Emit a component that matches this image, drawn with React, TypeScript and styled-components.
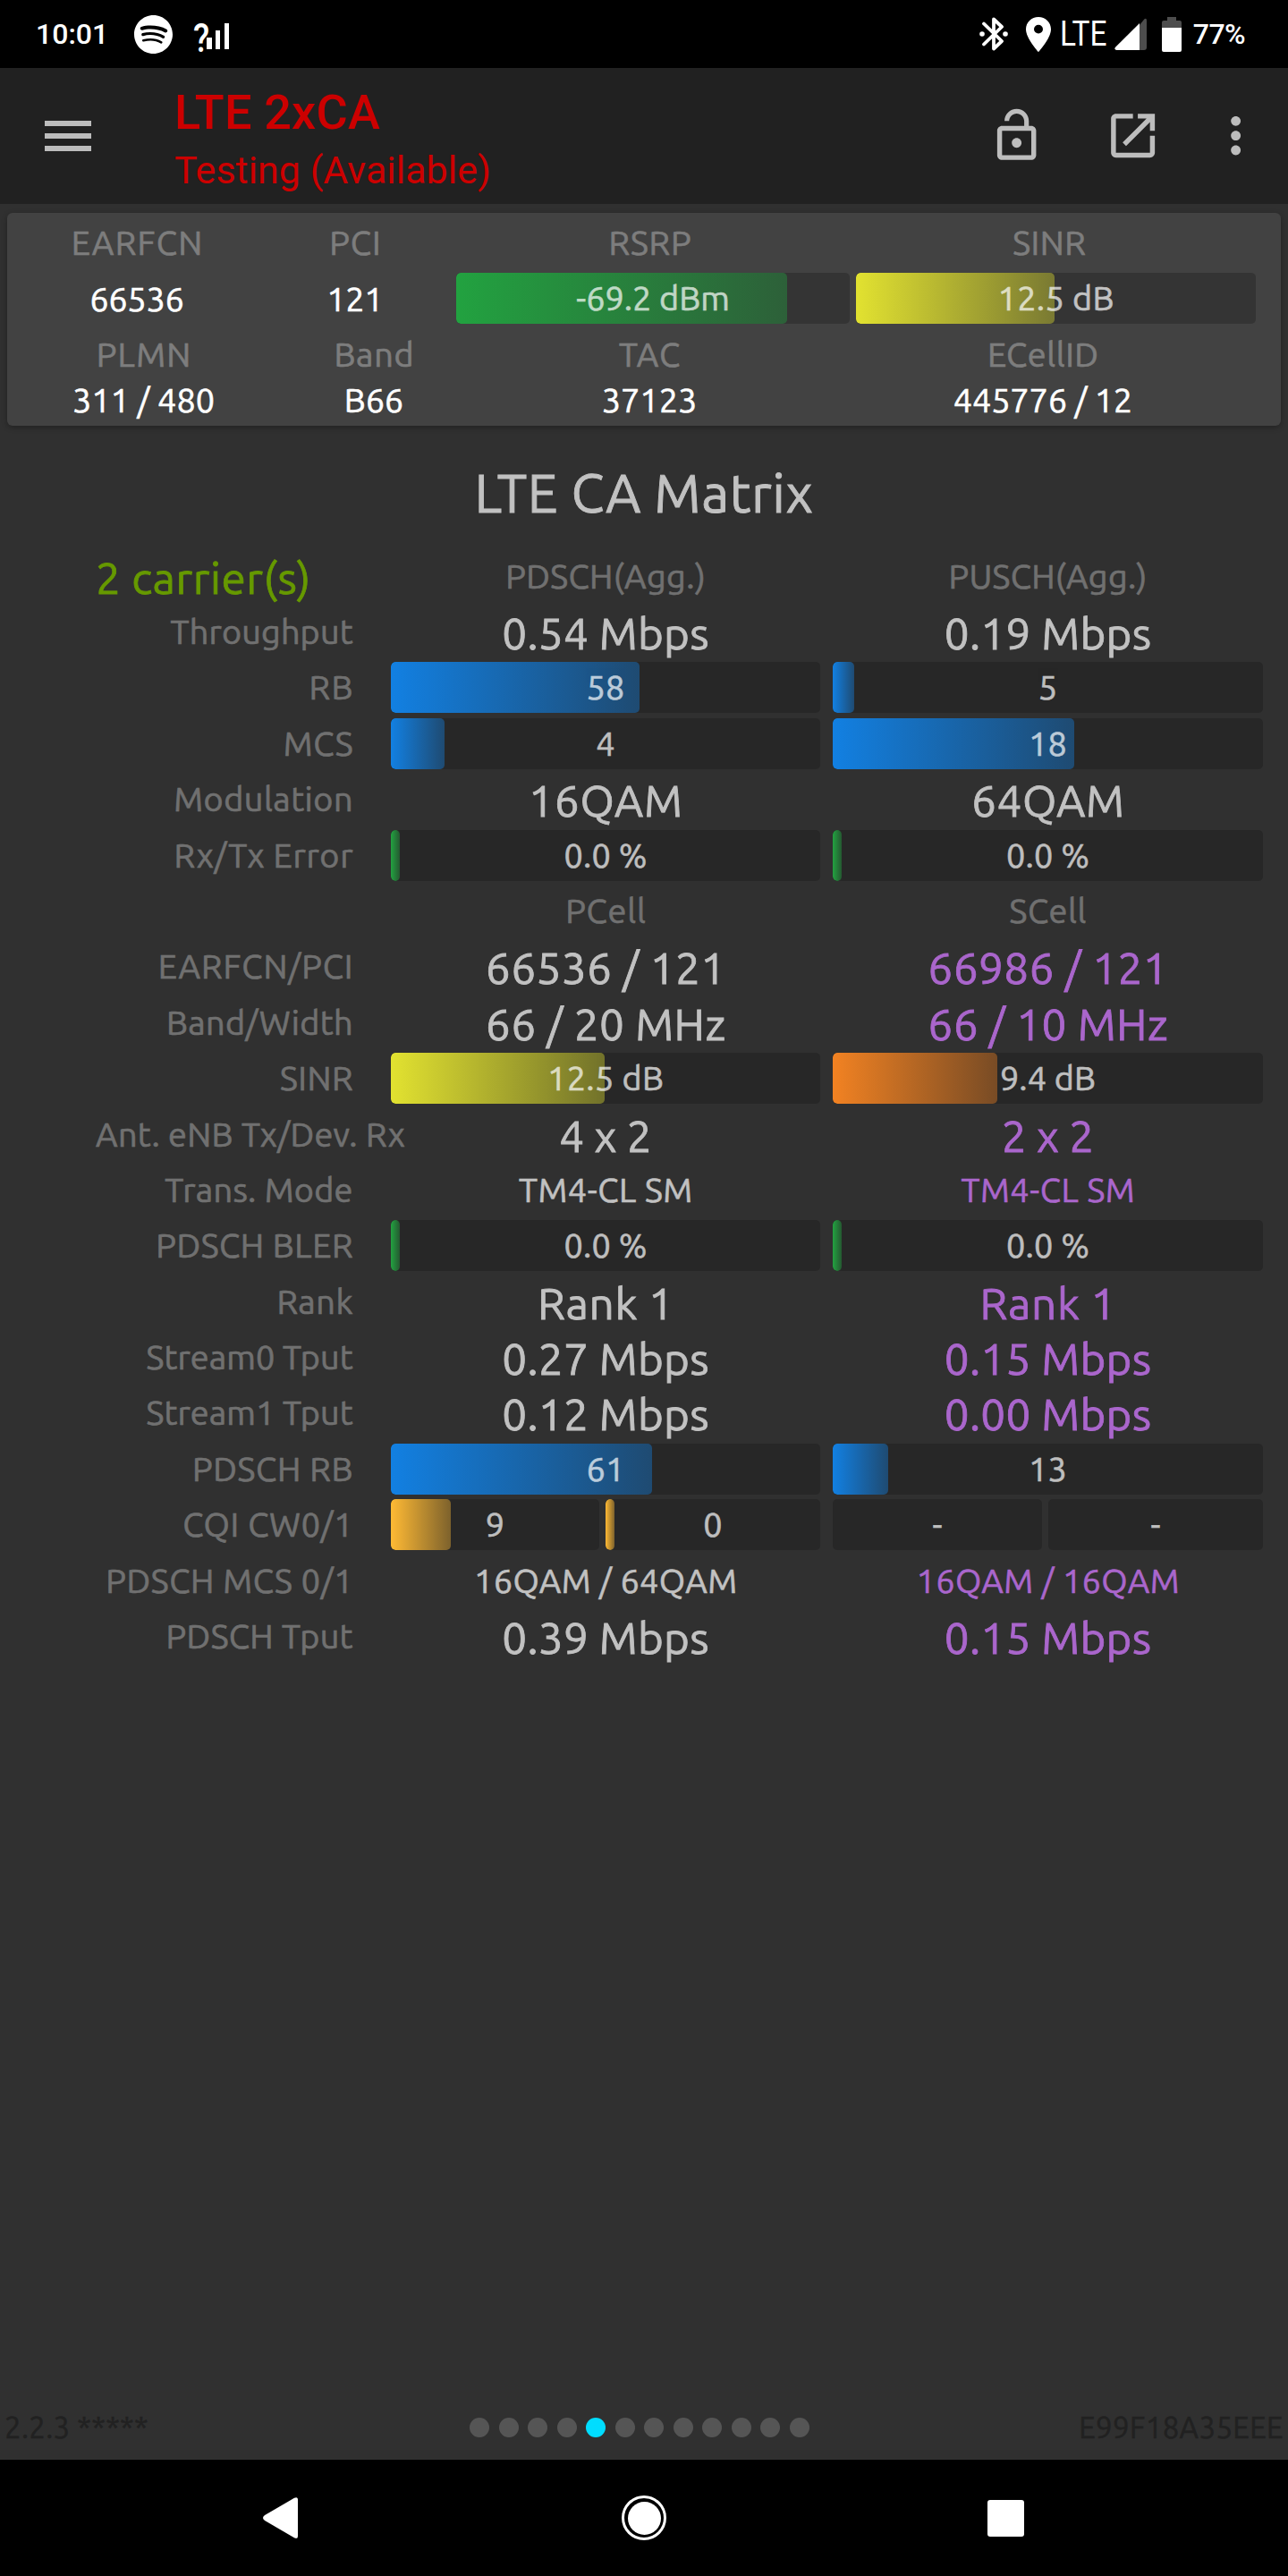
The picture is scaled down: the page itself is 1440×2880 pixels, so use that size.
import React from 'react';
import styled, { createGlobalStyle } from 'styled-components';
import { SiSpotify } from 'react-icons/si';

const GlobalStyle = createGlobalStyle`
  * { box-sizing: border-box; }
  body { margin: 0; background: #303030; }
`;

const Screen = styled.div`
  display: flex;
  flex-direction: column;
  width: 1440px;
  height: 2880px;
  overflow: hidden;
  background: #303030;
  font-family: 'Ubuntu', 'Noto Sans', 'Open Sans', sans-serif;
  color: #c1c1c1;
`;

/* ---------- status bar ---------- */

const StatusBar = styled.header`
  display: flex;
  align-items: center;
  flex: none;
  height: 76px;
  padding: 0 48px 0 40px;
  background: #000;
  color: #fff;
  font-family: Roboto, sans-serif;
`;

const StatusText = styled.span<{ $track?: number; $gap?: number }>`
  margin-left: ${(p) => p.$gap ?? 0}px;
  font-size: 32px;
  font-weight: 500;
  line-height: 38px;
  letter-spacing: ${(p) => p.$track ?? 0}px;
`;

const SpotifyIcon = styled(SiSpotify)`
  width: 43px;
  height: 43px;
  margin-left: 29px;
`;

const UnknownSignal = styled.div`
  display: flex;
  align-items: flex-end;
  height: 33px;
  margin-left: 23px;
`;

const QuestionMark = styled.span`
  width: 15px;
  font-size: 44px;
  font-weight: 500;
  line-height: 23px;
  transform: scaleX(0.85);
  transform-origin: left center;
`;

const SignalBar = styled.i<{ $h: number }>`
  width: 5.5px;
  height: ${(p) => p.$h}px;
  margin-right: 4.3px;
  background: #fff;
`;

const StatusRight = styled.div`
  display: flex;
  align-items: center;
  margin-left: auto;
`;

const NetworkType = styled.span`
  width: 58px;
  margin-left: 10px;
  font-size: 38px;
  line-height: 46px;
  transform: scaleX(0.88);
  transform-origin: left center;
`;

const Glyph = styled.svg<{ $gap?: number }>`
  display: block;
  flex: none;
  margin-left: ${(p) => p.$gap ?? 0}px;
`;

/* ---------- app bar ---------- */

const AppBar = styled.nav`
  display: flex;
  align-items: center;
  flex: none;
  height: 152px;
  padding: 0 26px 0 50px;
  background: #212121;
`;

const MenuLines = styled.div`
  display: flex;
  flex-direction: column;
  gap: 8.6px;
  width: 52px;
`;

const MenuLine = styled.i`
  height: 5.8px;
  background: #bdbdbd;
`;

const Heading = styled.div`
  flex: 1;
  margin-left: 93px;
  padding-top: 9px;
  color: #cc0000;
  font-family: Roboto, sans-serif;
  white-space: nowrap;
`;

const Title = styled.h1`
  margin: 0;
  font-size: 54px;
  font-weight: 500;
  line-height: 66px;
  letter-spacing: 0.2px;
`;

const Subtitle = styled.p`
  margin: 0;
  font-size: 43px;
  line-height: 62px;
`;

const ActionIcon = styled.svg<{ $gap?: number }>`
  flex: none;
  width: 65.3px;
  height: 65.3px;
  margin-left: ${(p) => p.$gap ?? 0}px;
  fill: #bdbdbd;
`;

/* ---------- text and meters ---------- */

type Tone = 'label' | 'value' | 'bright' | 'second' | 'carriers';

const tones: Record<Tone, { color: string; opacity: number }> = {
  label: { color: '#ffffff', opacity: 0.31 },
  value: { color: '#ffffff', opacity: 0.7 },
  bright: { color: '#ffffff', opacity: 1 },
  second: { color: '#aa66cc', opacity: 1 },
  carriers: { color: '#669900', opacity: 1 },
};

const Text = styled.span<{ $tone?: Tone; $large?: boolean; $track?: number }>`
  color: ${(p) => tones[p.$tone ?? 'value'].color};
  opacity: ${(p) => tones[p.$tone ?? 'value'].opacity};
  font-size: ${(p) => (p.$large ? 49.4 : 37.8)}px;
  line-height: ${(p) => (p.$large ? 59 : 56)}px;
  letter-spacing: ${(p) => p.$track ?? 0}px;
  margin-right: ${(p) => -(p.$track ?? 0)}px;
  -webkit-text-stroke: ${(p) => (p.$large ? 0.8 : 0.6)}px currentColor;
  white-space: nowrap;
`;

const fills = {
  blue: '18, 128, 226',
  green: '34, 162, 64',
  yellow: '226, 226, 48',
  orange: '242, 130, 34',
  amber: '255, 186, 52',
};

type Fill = keyof typeof fills;

const Track = styled.div<{ $width?: number }>`
  display: flex;
  position: relative;
  justify-content: center;
  width: ${(p) => (p.$width ? `${p.$width}px` : '100%')};
  height: 57px;
  border-radius: 5px;
  overflow: hidden;
  background: rgba(16, 16, 16, 0.26);
`;

const TrackFill = styled.div<{ $fill: Fill; $width: number }>`
  position: absolute;
  inset: 0 auto 0 0;
  width: ${(p) => p.$width}px;
  border-radius: 5px;
  background: linear-gradient(
    to right,
    rgb(${(p) => fills[p.$fill]}),
    rgba(${(p) => fills[p.$fill]}, 0.4)
  );
`;

const TrackText = styled(Text)`
  position: relative;
`;

interface MeterProps {
  text: string;
  track?: number;
  fill?: Fill;
  filled?: number;
  width?: number;
}

const Meter = ({ text, track, fill, filled, width }: MeterProps) => (
  <Track $width={width}>
    {fill && filled ? <TrackFill $fill={fill} $width={filled} /> : null}
    <TrackText $track={track}>{text}</TrackText>
  </Track>
);

/* ---------- serving cell card ---------- */

const Card = styled.section`
  display: flex;
  flex-direction: column;
  flex: none;
  height: 238px;
  margin: 10px 8px 0;
  padding-top: 5px;
  border-radius: 6px;
  background: #424242;
  box-shadow: 0 2px 6px rgba(0, 0, 0, 0.3);
`;

const SignalGrid = styled.div`
  display: grid;
  grid-template-columns: 290px 198px 454px 454px;
  grid-template-rows: 56px 57px;
  row-gap: 6px;
`;

const IdentityGrid = styled.div`
  display: grid;
  grid-template-columns: 305px 210px 406px 474px;
  grid-auto-rows: 50.7px;
  margin-top: 8.5px;
`;

const Cell = styled.div<{ $left?: number; $right?: number }>`
  display: flex;
  align-items: center;
  justify-content: center;
  padding: 0 ${(p) => p.$right ?? 0}px 0 ${(p) => p.$left ?? 0}px;
`;

/* ---------- carrier matrix ---------- */

const MatrixTitle = styled.h2`
  flex: none;
  margin: 40px 0 29.6px;
  font-size: 60.2px;
  font-weight: 400;
  line-height: 70px;
  letter-spacing: 0.57px;
  text-align: center;
  -webkit-text-stroke: 0.9px currentColor;
`;

const Matrix = styled.section`
  display: grid;
  grid-template-columns: 423px 480px 481px;
  grid-auto-rows: 62.4px;
  column-gap: 14px;
`;

const RowLabel = styled.div<{ $start?: boolean }>`
  display: flex;
  align-items: flex-start;
  justify-content: ${(p) => (p.$start ? 'flex-start' : 'flex-end')};
  padding: 0 28.5px 0 ${(p) => (p.$start ? 107 : 0)}px;
`;

const RowValue = styled.div`
  display: flex;
  align-items: flex-start;
  justify-content: center;
  gap: 7px;
`;

type Entry =
  | { kind: 'text'; text: string; large?: boolean; tone?: Tone; track?: number }
  | { kind: 'meters'; meters: MeterProps[] };

interface Row {
  label: string;
  track?: number;
  start?: boolean;
  headline?: boolean;
  cells: [Entry, Entry];
}

const head = (text: string, track: number): Entry => ({ kind: 'text', text, tone: 'label', track });
const big = (text: string, track = 0.28): Entry => ({ kind: 'text', text, large: true, track });
const big2 = (text: string, track = 0.28): Entry => ({ kind: 'text', text, large: true, tone: 'second', track });
const small = (text: string, track: number, tone: Tone = 'value'): Entry => ({ kind: 'text', text, tone, track });
const meter = (text: string, fill: Fill, filled: number, track = 0.2): Entry => ({
  kind: 'meters',
  meters: [{ text, fill, filled, track }],
});

const rows: Row[] = [
  { label: '2 carrier(s)', track: 0.53, start: true, headline: true, cells: [head('PDSCH(Agg.)', 0.39), head('PUSCH(Agg.)', 0.31)] },
  { label: 'Throughput', track: 0.16, cells: [big('0.54 Mbps'), big('0.19 Mbps')] },
  { label: 'RB', track: 1.3, cells: [meter('58', 'blue', 278), meter('5', 'blue', 24)] },
  { label: 'MCS', track: 0.78, cells: [meter('4', 'blue', 60), meter('18', 'blue', 270)] },
  { label: 'Modulation', track: 0.49, cells: [big('16QAM', 0.84), big('64QAM', 0.6)] },
  { label: 'Rx/Tx Error', track: 0.68, cells: [meter('0.0 %', 'green', 10), meter('0.0 %', 'green', 10)] },
  { label: '', cells: [head('PCell', 0.8), head('SCell', 0.57)] },
  { label: 'EARFCN/PCI', track: 0.93, cells: [big('66536 / 121', 0.47), big2('66986 / 121', 0.47)] },
  { label: 'Band/Width', track: 0.35, cells: [big('66 / 20 MHz', 0.47), big2('66 / 10 MHz', 0.47)] },
  { label: 'SINR', track: 0.51, cells: [meter('12.5 dB', 'yellow', 239, 0.33), meter('9.4 dB', 'orange', 184, 0.06)] },
  { label: 'Ant. eNB Tx/Dev. Rx', track: 0.33, start: true, cells: [big('4 x 2', 0), big2('2 x 2', 0)] },
  { label: 'Trans. Mode', track: 0.3, cells: [small('TM4-CL SM', 0.54), small('TM4-CL SM', 0.54, 'second')] },
  { label: 'PDSCH BLER', track: 0.55, cells: [meter('0.0 %', 'green', 10), meter('0.0 %', 'green', 10)] },
  { label: 'Rank', track: 0.51, cells: [big('Rank 1', 0.7), big2('Rank 1', 0.7)] },
  { label: 'Stream0 Tput', track: 0.07, cells: [big('0.27 Mbps'), big2('0.15 Mbps')] },
  { label: 'Stream1 Tput', track: 0.07, cells: [big('0.12 Mbps'), big2('0.00 Mbps')] },
  { label: 'PDSCH RB', track: 0.66, cells: [meter('61', 'blue', 292), meter('13', 'blue', 62)] },
  {
    label: 'CQI CW0/1',
    track: 0.65,
    cells: [
      {
        kind: 'meters',
        meters: [
          { text: '9', fill: 'amber', filled: 67, width: 233 },
          { text: '0', fill: 'amber', filled: 10, width: 240 },
        ],
      },
      { kind: 'meters', meters: [{ text: '-', width: 234 }, { text: '-', width: 240 }] },
    ],
  },
  { label: 'PDSCH MCS 0/1', track: 0.63, cells: [small('16QAM / 64QAM', 0.4), small('16QAM / 16QAM', 0.4, 'second')] },
  { label: 'PDSCH Tput', track: 0.37, cells: [big('0.39 Mbps'), big2('0.15 Mbps')] },
];

const EntryView = ({ entry }: { entry: Entry }) => (
  <RowValue>
    {entry.kind === 'text' ? (
      <Text $tone={entry.tone} $large={entry.large} $track={entry.track}>
        {entry.text}
      </Text>
    ) : (
      entry.meters.map((m, i) => <Meter key={i} {...m} />)
    )}
  </RowValue>
);

/* ---------- footer and navigation ---------- */

const Footer = styled.footer`
  display: grid;
  grid-template-columns: 1fr auto 1fr;
  align-items: center;
  flex: none;
  height: 72px;
  margin-top: auto;
  padding: 0 5px;
  color: #212121;
  font-size: 33px;
  line-height: 44px;
  -webkit-text-stroke: 0.5px currentColor;
`;

const Version = styled.span`
  letter-spacing: 0.27px;
`;

const DeviceId = styled.span`
  justify-self: end;
  letter-spacing: 0.36px;
`;

const Dots = styled.div`
  display: flex;
  gap: 10.56px;
  padding-right: 10px;
`;

const Dot = styled.i<{ $active: boolean }>`
  width: 22px;
  height: 22px;
  border-radius: 50%;
  background: ${(p) => (p.$active ? '#00ddff' : '#555555')};
`;

const NavBar = styled.nav`
  display: flex;
  align-items: center;
  flex: none;
  height: 130px;
  padding-left: 294px;
  background: #000;
`;

const HomeRing = styled.div`
  display: flex;
  align-items: center;
  justify-content: center;
  width: 50px;
  height: 50px;
  margin-left: 362px;
  border: 3px solid #fff;
  border-radius: 50%;
`;

const HomeDisc = styled.i`
  width: 37px;
  height: 37px;
  border-radius: 50%;
  background: #fff;
`;

const RecentsSquare = styled.i`
  width: 41px;
  height: 41px;
  margin-left: 359px;
  border-radius: 3px;
  background: #fff;
`;

export default function App() {
  return (
    <Screen>
      <GlobalStyle />
      <StatusBar>
        <StatusText>10:01</StatusText>
        <SpotifyIcon />
        <UnknownSignal>
          <QuestionMark>?</QuestionMark>
          <SignalBar $h={13} />
          <SignalBar $h={21} />
          <SignalBar $h={29} />
        </UnknownSignal>
        <StatusRight>
          <Glyph width="32" height="38" viewBox="0 0 32 38">
            <path d="M5 7.5 25 27 16 35.5V2.5L25 11 5 30.5" fill="none" stroke="#fff" strokeWidth="3.8" strokeLinecap="round" strokeLinejoin="round" />
            <circle cx="3" cy="19" r="2.8" fill="#fff" />
            <circle cx="29" cy="19" r="2.8" fill="#fff" />
          </Glyph>
          <Glyph $gap={20} width="28" height="39" viewBox="5 2 14 20" preserveAspectRatio="none">
            <path fill="#fff" d="M12 2C8.13 2 5 5.13 5 9c0 5.25 7 13 7 13s7-7.75 7-13c0-3.87-3.13-7-7-7zm0 9.5a2.5 2.5 0 0 1 0-5 2.5 2.5 0 0 1 0 5z" />
          </Glyph>
          <NetworkType>LTE</NetworkType>
          <Glyph $gap={3} width="36" height="36" viewBox="0 0 36 36">
            <path fill="#4d4d4d" d="M28 8 33.5 1.2Q36 0 36 3V33Q36 36 33 36H28Z" />
            <path fill="#fff" d="M28 6V36H2.500Q-.5 36 .8 33Z" />
          </Glyph>
          <Glyph $gap={17} width="22" height="39" viewBox="0 0 22 39">
            <path fill="#4d4d4d" d="M6 0H16V4H20Q22 4 22 6V13H0V6Q0 4 2 4H6Z" />
            <path fill="#fff" d="M0 12H22V37Q22 39 20 39H2Q0 39 0 37Z" />
          </Glyph>
          <StatusText $track={-0.6} $gap={13}>77%</StatusText>
        </StatusRight>
      </StatusBar>

      <AppBar>
        <MenuLines>
          <MenuLine />
          <MenuLine />
          <MenuLine />
        </MenuLines>
        <Heading>
          <Title>LTE 2xCA</Title>
          <Subtitle>Testing (Available)</Subtitle>
        </Heading>
        <ActionIcon viewBox="0 0 24 24">
          <path d="M12 17c1.1 0 2-.9 2-2s-.9-2-2-2-2 .9-2 2 .9 2 2 2zm6-9h-1V6c0-2.76-2.24-5-5-5S7 3.24 7 6h1.9c0-1.71 1.39-3.1 3.1-3.1 1.71 0 3.1 1.39 3.1 3.1v2H6c-1.1 0-2 .9-2 2v10c0 1.1.9 2 2 2h12c1.1 0 2-.9 2-2V10c0-1.1-.9-2-2-2zm0 12H6V10h12v10z" />
        </ActionIcon>
        <ActionIcon viewBox="0 0 24 24" $gap={65}>
          <path d="M19 19H5V5h7V3H5c-1.11 0-2 .9-2 2v14c0 1.1.89 2 2 2h14c1.1 0 2-.9 2-2v-7h-2v7zM14 3v2h3.59l-9.83 9.83 1.41 1.41L19 6.41V10h2V3h-7z" />
        </ActionIcon>
        <ActionIcon viewBox="0 0 24 24" $gap={49}>
          <path d="M12 8c1.1 0 2-.9 2-2s-.9-2-2-2-2 .9-2 2 .9 2 2 2zm0 2c-1.1 0-2 .9-2 2s.9 2 2 2 2-.9 2-2-.9-2-2-2zm0 6c-1.1 0-2 .9-2 2s.9 2 2 2 2-.9 2-2-.9-2-2-2z" />
        </ActionIcon>
      </AppBar>

      <Card>
        <SignalGrid>
          <Cell><Text $tone="label" $track={1.31}>EARFCN</Text></Cell>
          <Cell><Text $tone="label" $track={1}>PCI</Text></Cell>
          <Cell $left={7}><Text $tone="label" $track={0.81}>RSRP</Text></Cell>
          <Cell $right={8}><Text $tone="label" $track={0.51}>SINR</Text></Cell>
          <Cell><Text $tone="bright" $track={-0.22}>66536</Text></Cell>
          <Cell><Text $tone="bright" $track={-0.3}>121</Text></Cell>
          <Cell $left={14}><Meter text="-69.2 dBm" fill="green" filled={370} /></Cell>
          <Cell $left={7}><Meter text="12.5 dB" fill="yellow" filled={222} track={0.33} /></Cell>
        </SignalGrid>
        <IdentityGrid>
          <Cell><Text $tone="label" $track={1.3}>PLMN</Text></Cell>
          <Cell><Text $tone="label" $track={0.66}>Band</Text></Cell>
          <Cell><Text $tone="label" $track={0.94}>TAC</Text></Cell>
          <Cell><Text $tone="label" $track={0.55}>ECellID</Text></Cell>
          <Cell><Text $tone="bright">311 / 480</Text></Cell>
          <Cell><Text $tone="bright" $track={-0.16}>B66</Text></Cell>
          <Cell><Text $tone="bright">37123</Text></Cell>
          <Cell><Text $tone="bright" $track={-0.14}>445776 / 12</Text></Cell>
        </IdentityGrid>
      </Card>

      <MatrixTitle>LTE CA Matrix</MatrixTitle>
      <Matrix>
        {rows.map((row, i) => (
          <React.Fragment key={i}>
            <RowLabel $start={row.start}>
              <Text $tone={row.headline ? 'carriers' : 'label'} $large={row.headline} $track={row.track}>
                {row.label}
              </Text>
            </RowLabel>
            <EntryView entry={row.cells[0]} />
            <EntryView entry={row.cells[1]} />
          </React.Fragment>
        ))}
      </Matrix>

      <Footer>
        <Version>2.2.3 *****</Version>
        <Dots>
          {Array.from({ length: 12 }, (_, i) => (
            <Dot key={i} $active={i === 4} />
          ))}
        </Dots>
        <DeviceId>E99F18A35EEE</DeviceId>
      </Footer>

      <NavBar>
        <Glyph width="39" height="46" viewBox="0 0 39 46">
          <path fill="#fff" d="M35 .8Q39 -1.200 39 3V43Q39 47.200 35 45.200L2 26Q-2 23 2 20Z" />
        </Glyph>
        <HomeRing>
          <HomeDisc />
        </HomeRing>
        <RecentsSquare />
      </NavBar>
    </Screen>
  );
}
